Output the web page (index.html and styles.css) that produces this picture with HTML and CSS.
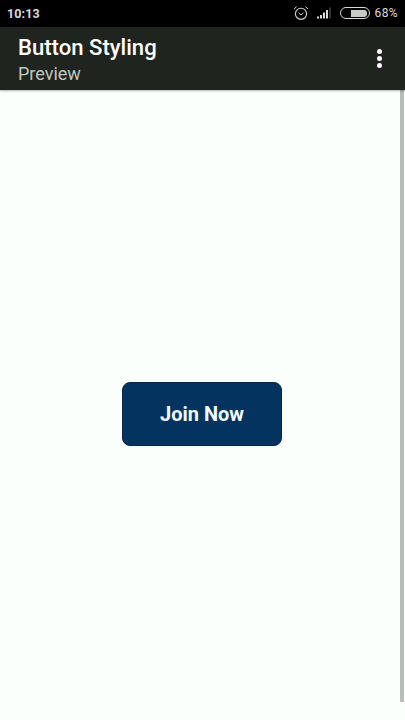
FILE: index.html
```html
<!DOCTYPE html>
<html lang="en">
<head>
<meta charset="utf-8">
<title>Button Styling</title>
<link rel="stylesheet" href="styles.css">
</head>
<body>
<div class="status">
  <span class="time">10:13</span>
  <div class="status-right">
    <svg class="alarm" width="16" height="16" viewBox="0 0 16 16" fill="none" stroke="#cfd2cf">
      <circle cx="8" cy="8.8" r="5.6" stroke-width="1.1"/>
      <path d="M5.6 7.8 8 10l2.4-2.2" stroke-width="1"/>
      <path d="M1 4 3.6 1.6M15 4 12.4 1.6" stroke-width="1"/>
    </svg>
    <svg class="signal" width="16" height="12" viewBox="0 0 16 12" fill="#d8dbd8">
      <rect x="0" y="9.5" width="2" height="2"/>
      <rect x="3" y="8" width="2" height="3.500"/>
      <rect x="6" y="5.500" width="2" height="6"/>
      <rect x="9" y="3" width="2" height="8.500"/>
      <rect x="12.500" y="0.500" width="1" height="11" fill="#666"/>
    </svg>
    <div class="battery"><div class="battery-fill"></div></div>
    <span class="pct">68%</span>
  </div>
</div>
<header class="appbar">
  <div class="titles">
    <div class="title">Button Styling</div>
    <div class="subtitle">Preview</div>
  </div>
  <div class="menu"><i></i><i></i><i></i></div>
</header>
<div class="content">
  <main class="stage">
    <button class="join">Join Now</button>
  </main>
  <div class="scrollbar"></div>
</div>
</body>
</html>
```
FILE: styles.css
```css
* { box-sizing: border-box; }
html, body { margin: 0; height: 100%; }
body {
  width: 405px;
  height: 720px;
  overflow: hidden;
  display: flex;
  flex-direction: column;
  background: #fbfffb;
  font-family: Roboto, "Liberation Sans", sans-serif;
}
.status {
  height: 27px;
  flex: none;
  background: #000;
  color: #d8dad8;
  display: flex;
  align-items: center;
  justify-content: space-between;
  padding: 0 7px 1px 7px;
  font-size: 12px;
}
.time { font-weight: 700; font-size: 12.500px; letter-spacing: 0.1px; }
.status-right { display: flex; align-items: center; }
.alarm { margin-right: 8px; margin-left: -2px; }
.signal { margin-right: 7px; }
.battery {
  width: 30px;
  height: 12px;
  border: 1px solid #d8dad8;
  border-radius: 6px;
  padding: 1.500px 1.500px 1.500px 10px;
  margin-right: 5px;
}
.battery-fill { height: 100%; background: #c8cac6; border-radius: 0 3px 3px 0; }
.pct { font-size: 12px; letter-spacing: 0.4px; }
.appbar {
  height: 63px;
  flex: none;
  background: #20241f;
  display: flex;
  align-items: center;
  justify-content: space-between;
  padding: 0 23px 0 18px;
  box-shadow: 0 1px 2px rgba(0, 0, 0, 0.3);
  position: relative;
}
.titles { padding-top: 1px; }
.title { color: #fff; font-size: 22.100px; font-weight: 500; line-height: 28px; }
.subtitle { color: #c2c5c0; font-size: 18px; line-height: 22px; margin-top: 2px; }
.menu { display: flex; flex-direction: column; gap: 2px; margin-top: -1px; }
.menu i { width: 5px; height: 5px; border-radius: 50%; background: #fff; display: block; }
.content { flex: 1; display: flex; min-height: 0; }
.stage {
  flex: 1;
  display: flex;
  justify-content: center;
  padding-top: 292px;
  padding-left: 4px;
}
.join {
  width: 160px;
  height: 64px;
  border: 1px solid #02264d;
  border-radius: 8px;
  background: #04335f;
  color: #f2faff;
  font-family: Roboto, "Liberation Sans", sans-serif;
  font-size: 20px;
  font-weight: 700;
}
.scrollbar {
  width: 4px;
  flex: none;
  margin: 0 1px 18px 0;
  background: #b7bdb8;
}
```
